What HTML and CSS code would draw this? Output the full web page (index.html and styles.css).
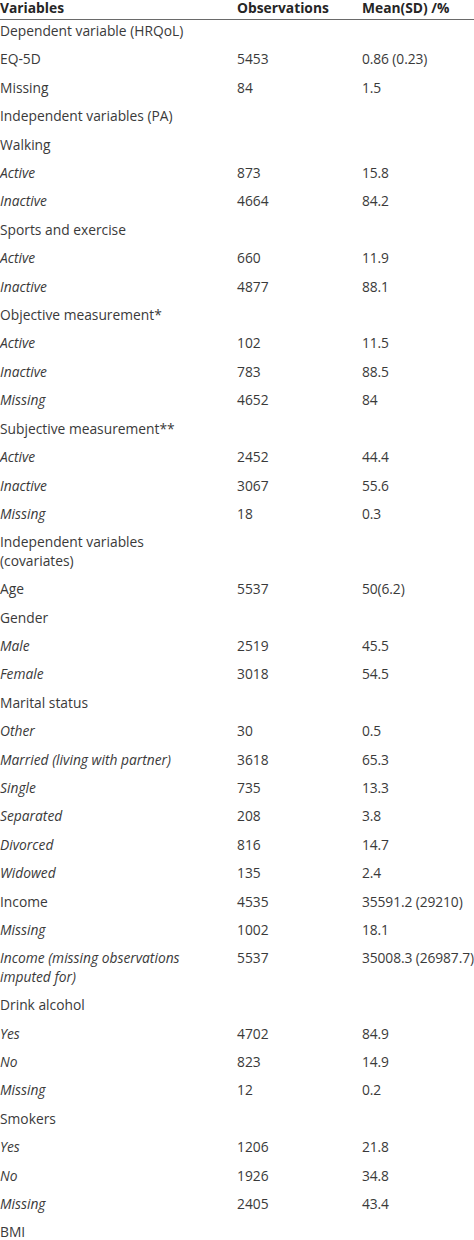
FILE: index.html
```html
<!DOCTYPE html>
<html>
<head>
<meta charset="utf-8">
<link rel="stylesheet" href="styles.css">
</head>
<body>
<div class="wrap">
<table class="tbl">
<colgroup><col class="c1"><col class="c2"><col class="c3"></colgroup>
<thead>
<tr><th>Variables</th><th>Observations</th><th>Mean(SD) /%</th></tr>
</thead>
<tbody>
<tr><td>Dependent variable (HRQoL)</td><td></td><td></td></tr>
<tr><td>EQ-5D</td><td>5453</td><td>0.86 (0.23)</td></tr>
<tr><td>Missing</td><td>84</td><td>1.5</td></tr>
<tr><td>Independent variables (PA)</td><td></td><td></td></tr>
<tr><td>Walking</td><td></td><td></td></tr>
<tr><td class="it">Active</td><td>873</td><td>15.8</td></tr>
<tr><td class="it">Inactive</td><td>4664</td><td>84.2</td></tr>
<tr><td>Sports and exercise</td><td></td><td></td></tr>
<tr><td class="it">Active</td><td>660</td><td>11.9</td></tr>
<tr><td class="it">Inactive</td><td>4877</td><td>88.1</td></tr>
<tr><td>Objective measurement*</td><td></td><td></td></tr>
<tr><td class="it">Active</td><td>102</td><td>11.5</td></tr>
<tr><td class="it">Inactive</td><td>783</td><td>88.5</td></tr>
<tr><td class="it">Missing</td><td>4652</td><td>84</td></tr>
<tr><td>Subjective measurement**</td><td></td><td></td></tr>
<tr><td class="it">Active</td><td>2452</td><td>44.4</td></tr>
<tr><td class="it">Inactive</td><td>3067</td><td>55.6</td></tr>
<tr><td class="it">Missing</td><td>18</td><td>0.3</td></tr>
<tr><td>Independent variables<br>(covariates)</td><td></td><td></td></tr>
<tr><td>Age</td><td>5537</td><td>50(6.2)</td></tr>
<tr><td>Gender</td><td></td><td></td></tr>
<tr><td class="it">Male</td><td>2519</td><td>45.5</td></tr>
<tr><td class="it">Female</td><td>3018</td><td>54.5</td></tr>
<tr><td>Marital status</td><td></td><td></td></tr>
<tr><td class="it">Other</td><td>30</td><td>0.5</td></tr>
<tr><td class="it">Married (living with partner)</td><td>3618</td><td>65.3</td></tr>
<tr><td class="it">Single</td><td>735</td><td>13.3</td></tr>
<tr><td class="it">Separated</td><td>208</td><td>3.8</td></tr>
<tr><td class="it">Divorced</td><td>816</td><td>14.7</td></tr>
<tr><td class="it">Widowed</td><td>135</td><td>2.4</td></tr>
<tr><td>Income</td><td>4535</td><td>35591.2 (29210)</td></tr>
<tr><td class="it">Missing</td><td>1002</td><td>18.1</td></tr>
<tr><td class="it">Income (missing observations<br>imputed for)</td><td>5537</td><td>35008.3 (26987.7)</td></tr>
<tr><td>Drink alcohol</td><td></td><td></td></tr>
<tr><td class="it">Yes</td><td>4702</td><td>84.9</td></tr>
<tr><td class="it">No</td><td>823</td><td>14.9</td></tr>
<tr><td class="it">Missing</td><td>12</td><td>0.2</td></tr>
<tr><td>Smokers</td><td></td><td></td></tr>
<tr><td class="it">Yes</td><td>1206</td><td>21.8</td></tr>
<tr><td class="it">No</td><td>1926</td><td>34.8</td></tr>
<tr><td class="it">Missing</td><td>2405</td><td>43.4</td></tr>
<tr><td>BMI</td><td></td><td></td></tr>
</tbody>
</table>
</div>
</body>
</html>
```

FILE: styles.css
```css
html, body {
  margin: 0;
  padding: 0;
  background: #ffffff;
}
.wrap {
  width: 474px;
  overflow: hidden;
}
.tbl {
  margin: 0;
  border-collapse: collapse;
  table-layout: fixed;
  width: 480px;
  font-family: "Open Sans", "Noto Sans", sans-serif;
  font-size: 13.8px;
  color: #3a3a3a;
}
.c1 { width: 237px; }
.c2 { width: 125px; }
.c3 { width: 118px; }
.tbl th {
  text-align: left;
  font-weight: 700;
  color: #262626;
  line-height: 15px;
  padding: 0 0 4px 0;
  border-bottom: 1.5px solid #6a6a6a;
  white-space: nowrap;
}
.tbl td {
  line-height: 18.4px;
  padding: 2px 0 8px 0;
  vertical-align: top;
  white-space: nowrap;
}
.tbl td:last-child {
  letter-spacing: -0.1px;
}
.it {
  font-style: italic;
}
```
